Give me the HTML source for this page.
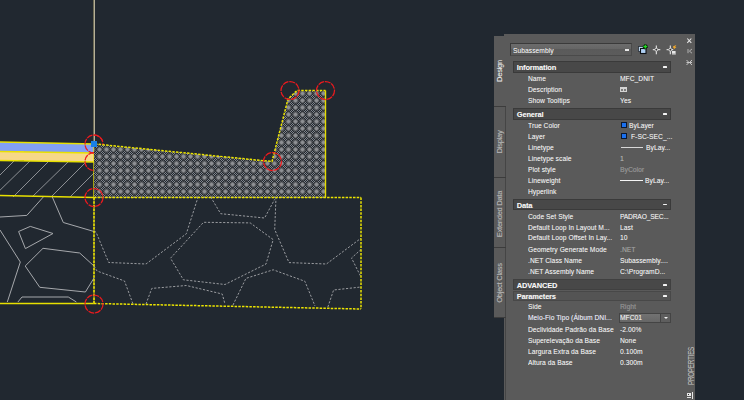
<!DOCTYPE html>
<html><head><meta charset="utf-8">
<style>
*{margin:0;padding:0;box-sizing:border-box}
html,body{width:744px;height:400px;overflow:hidden;background:#212830;font-family:"Liberation Sans",sans-serif}
.a{position:absolute}
.t{position:absolute;font-size:7.7px;line-height:10px;white-space:nowrap;color:#f2f2f2;letter-spacing:0.1px;text-shadow:0.3px 0 0 rgba(240,240,240,0.35);transform:scaleX(0.86);transform-origin:0 0}
.b{font-weight:bold;letter-spacing:-0.1px;color:#f4f4f4}
</style></head><body>
<svg width="744" height="400" viewBox="0 0 744 400" style="position:absolute;left:0;top:0" shape-rendering="crispEdges">
<defs>
<pattern id="hp" x="12" y="13" width="14" height="14" patternUnits="userSpaceOnUse"><rect x="0" y="0" width="1" height="1" fill="#80868e"/><rect x="1" y="0" width="1" height="1" fill="#22262c"/><rect x="2" y="0" width="1" height="1" fill="#50545a"/><rect x="3" y="0" width="1" height="1" fill="#36393e"/><rect x="4" y="0" width="1" height="1" fill="#50545a"/><rect x="5" y="0" width="1" height="1" fill="#22262c"/><rect x="6" y="0" width="1" height="1" fill="#80868e"/><rect x="7" y="0" width="1" height="1" fill="#22262c"/><rect x="8" y="0" width="1" height="1" fill="#80868e"/><rect x="9" y="0" width="1" height="1" fill="#2c3035"/><rect x="10" y="0" width="1" height="1" fill="#36393e"/><rect x="11" y="0" width="1" height="1" fill="#2c3035"/><rect x="12" y="0" width="1" height="1" fill="#80868e"/><rect x="13" y="0" width="1" height="1" fill="#22262c"/><rect x="0" y="1" width="1" height="1" fill="#22262c"/><rect x="1" y="1" width="1" height="1" fill="#50545a"/><rect x="2" y="1" width="1" height="1" fill="#55585c"/><rect x="3" y="1" width="1" height="1" fill="#6c6e72"/><rect x="4" y="1" width="1" height="1" fill="#55585c"/><rect x="5" y="1" width="1" height="1" fill="#50545a"/><rect x="6" y="1" width="1" height="1" fill="#22262c"/><rect x="7" y="1" width="1" height="1" fill="#80868e"/><rect x="8" y="1" width="1" height="1" fill="#2c3035"/><rect x="9" y="1" width="1" height="1" fill="#55585c"/><rect x="10" y="1" width="1" height="1" fill="#6c6e72"/><rect x="11" y="1" width="1" height="1" fill="#55585c"/><rect x="12" y="1" width="1" height="1" fill="#2c3035"/><rect x="13" y="1" width="1" height="1" fill="#80868e"/><rect x="0" y="2" width="1" height="1" fill="#50545a"/><rect x="1" y="2" width="1" height="1" fill="#55585c"/><rect x="2" y="2" width="1" height="1" fill="#808286"/><rect x="3" y="2" width="1" height="1" fill="#8e9094"/><rect x="4" y="2" width="1" height="1" fill="#808286"/><rect x="5" y="2" width="1" height="1" fill="#55585c"/><rect x="6" y="2" width="1" height="1" fill="#50545a"/><rect x="7" y="2" width="1" height="1" fill="#2c3035"/><rect x="8" y="2" width="1" height="1" fill="#55585c"/><rect x="9" y="2" width="1" height="1" fill="#808286"/><rect x="10" y="2" width="1" height="1" fill="#8e9094"/><rect x="11" y="2" width="1" height="1" fill="#808286"/><rect x="12" y="2" width="1" height="1" fill="#55585c"/><rect x="13" y="2" width="1" height="1" fill="#2c3035"/><rect x="0" y="3" width="1" height="1" fill="#36393e"/><rect x="1" y="3" width="1" height="1" fill="#6c6e72"/><rect x="2" y="3" width="1" height="1" fill="#8e9094"/><rect x="3" y="3" width="1" height="1" fill="#8e9094"/><rect x="4" y="3" width="1" height="1" fill="#8e9094"/><rect x="5" y="3" width="1" height="1" fill="#6c6e72"/><rect x="6" y="3" width="1" height="1" fill="#36393e"/><rect x="7" y="3" width="1" height="1" fill="#36393e"/><rect x="8" y="3" width="1" height="1" fill="#6c6e72"/><rect x="9" y="3" width="1" height="1" fill="#8e9094"/><rect x="10" y="3" width="1" height="1" fill="#8e9094"/><rect x="11" y="3" width="1" height="1" fill="#8e9094"/><rect x="12" y="3" width="1" height="1" fill="#6c6e72"/><rect x="13" y="3" width="1" height="1" fill="#36393e"/><rect x="0" y="4" width="1" height="1" fill="#50545a"/><rect x="1" y="4" width="1" height="1" fill="#55585c"/><rect x="2" y="4" width="1" height="1" fill="#808286"/><rect x="3" y="4" width="1" height="1" fill="#8e9094"/><rect x="4" y="4" width="1" height="1" fill="#808286"/><rect x="5" y="4" width="1" height="1" fill="#55585c"/><rect x="6" y="4" width="1" height="1" fill="#50545a"/><rect x="7" y="4" width="1" height="1" fill="#2c3035"/><rect x="8" y="4" width="1" height="1" fill="#55585c"/><rect x="9" y="4" width="1" height="1" fill="#808286"/><rect x="10" y="4" width="1" height="1" fill="#8e9094"/><rect x="11" y="4" width="1" height="1" fill="#808286"/><rect x="12" y="4" width="1" height="1" fill="#55585c"/><rect x="13" y="4" width="1" height="1" fill="#2c3035"/><rect x="0" y="5" width="1" height="1" fill="#22262c"/><rect x="1" y="5" width="1" height="1" fill="#50545a"/><rect x="2" y="5" width="1" height="1" fill="#55585c"/><rect x="3" y="5" width="1" height="1" fill="#6c6e72"/><rect x="4" y="5" width="1" height="1" fill="#55585c"/><rect x="5" y="5" width="1" height="1" fill="#50545a"/><rect x="6" y="5" width="1" height="1" fill="#22262c"/><rect x="7" y="5" width="1" height="1" fill="#80868e"/><rect x="8" y="5" width="1" height="1" fill="#2c3035"/><rect x="9" y="5" width="1" height="1" fill="#55585c"/><rect x="10" y="5" width="1" height="1" fill="#6c6e72"/><rect x="11" y="5" width="1" height="1" fill="#55585c"/><rect x="12" y="5" width="1" height="1" fill="#2c3035"/><rect x="13" y="5" width="1" height="1" fill="#80868e"/><rect x="0" y="6" width="1" height="1" fill="#80868e"/><rect x="1" y="6" width="1" height="1" fill="#22262c"/><rect x="2" y="6" width="1" height="1" fill="#50545a"/><rect x="3" y="6" width="1" height="1" fill="#36393e"/><rect x="4" y="6" width="1" height="1" fill="#50545a"/><rect x="5" y="6" width="1" height="1" fill="#22262c"/><rect x="6" y="6" width="1" height="1" fill="#80868e"/><rect x="7" y="6" width="1" height="1" fill="#22262c"/><rect x="8" y="6" width="1" height="1" fill="#80868e"/><rect x="9" y="6" width="1" height="1" fill="#2c3035"/><rect x="10" y="6" width="1" height="1" fill="#36393e"/><rect x="11" y="6" width="1" height="1" fill="#2c3035"/><rect x="12" y="6" width="1" height="1" fill="#80868e"/><rect x="13" y="6" width="1" height="1" fill="#22262c"/><rect x="0" y="7" width="1" height="1" fill="#22262c"/><rect x="1" y="7" width="1" height="1" fill="#80868e"/><rect x="2" y="7" width="1" height="1" fill="#2c3035"/><rect x="3" y="7" width="1" height="1" fill="#36393e"/><rect x="4" y="7" width="1" height="1" fill="#2c3035"/><rect x="5" y="7" width="1" height="1" fill="#80868e"/><rect x="6" y="7" width="1" height="1" fill="#22262c"/><rect x="7" y="7" width="1" height="1" fill="#80868e"/><rect x="8" y="7" width="1" height="1" fill="#22262c"/><rect x="9" y="7" width="1" height="1" fill="#50545a"/><rect x="10" y="7" width="1" height="1" fill="#36393e"/><rect x="11" y="7" width="1" height="1" fill="#50545a"/><rect x="12" y="7" width="1" height="1" fill="#22262c"/><rect x="13" y="7" width="1" height="1" fill="#80868e"/><rect x="0" y="8" width="1" height="1" fill="#80868e"/><rect x="1" y="8" width="1" height="1" fill="#2c3035"/><rect x="2" y="8" width="1" height="1" fill="#55585c"/><rect x="3" y="8" width="1" height="1" fill="#6c6e72"/><rect x="4" y="8" width="1" height="1" fill="#55585c"/><rect x="5" y="8" width="1" height="1" fill="#2c3035"/><rect x="6" y="8" width="1" height="1" fill="#80868e"/><rect x="7" y="8" width="1" height="1" fill="#22262c"/><rect x="8" y="8" width="1" height="1" fill="#50545a"/><rect x="9" y="8" width="1" height="1" fill="#55585c"/><rect x="10" y="8" width="1" height="1" fill="#6c6e72"/><rect x="11" y="8" width="1" height="1" fill="#55585c"/><rect x="12" y="8" width="1" height="1" fill="#50545a"/><rect x="13" y="8" width="1" height="1" fill="#22262c"/><rect x="0" y="9" width="1" height="1" fill="#2c3035"/><rect x="1" y="9" width="1" height="1" fill="#55585c"/><rect x="2" y="9" width="1" height="1" fill="#808286"/><rect x="3" y="9" width="1" height="1" fill="#8e9094"/><rect x="4" y="9" width="1" height="1" fill="#808286"/><rect x="5" y="9" width="1" height="1" fill="#55585c"/><rect x="6" y="9" width="1" height="1" fill="#2c3035"/><rect x="7" y="9" width="1" height="1" fill="#50545a"/><rect x="8" y="9" width="1" height="1" fill="#55585c"/><rect x="9" y="9" width="1" height="1" fill="#808286"/><rect x="10" y="9" width="1" height="1" fill="#8e9094"/><rect x="11" y="9" width="1" height="1" fill="#808286"/><rect x="12" y="9" width="1" height="1" fill="#55585c"/><rect x="13" y="9" width="1" height="1" fill="#50545a"/><rect x="0" y="10" width="1" height="1" fill="#36393e"/><rect x="1" y="10" width="1" height="1" fill="#6c6e72"/><rect x="2" y="10" width="1" height="1" fill="#8e9094"/><rect x="3" y="10" width="1" height="1" fill="#8e9094"/><rect x="4" y="10" width="1" height="1" fill="#8e9094"/><rect x="5" y="10" width="1" height="1" fill="#6c6e72"/><rect x="6" y="10" width="1" height="1" fill="#36393e"/><rect x="7" y="10" width="1" height="1" fill="#36393e"/><rect x="8" y="10" width="1" height="1" fill="#6c6e72"/><rect x="9" y="10" width="1" height="1" fill="#8e9094"/><rect x="10" y="10" width="1" height="1" fill="#8e9094"/><rect x="11" y="10" width="1" height="1" fill="#8e9094"/><rect x="12" y="10" width="1" height="1" fill="#6c6e72"/><rect x="13" y="10" width="1" height="1" fill="#36393e"/><rect x="0" y="11" width="1" height="1" fill="#2c3035"/><rect x="1" y="11" width="1" height="1" fill="#55585c"/><rect x="2" y="11" width="1" height="1" fill="#808286"/><rect x="3" y="11" width="1" height="1" fill="#8e9094"/><rect x="4" y="11" width="1" height="1" fill="#808286"/><rect x="5" y="11" width="1" height="1" fill="#55585c"/><rect x="6" y="11" width="1" height="1" fill="#2c3035"/><rect x="7" y="11" width="1" height="1" fill="#50545a"/><rect x="8" y="11" width="1" height="1" fill="#55585c"/><rect x="9" y="11" width="1" height="1" fill="#808286"/><rect x="10" y="11" width="1" height="1" fill="#8e9094"/><rect x="11" y="11" width="1" height="1" fill="#808286"/><rect x="12" y="11" width="1" height="1" fill="#55585c"/><rect x="13" y="11" width="1" height="1" fill="#50545a"/><rect x="0" y="12" width="1" height="1" fill="#80868e"/><rect x="1" y="12" width="1" height="1" fill="#2c3035"/><rect x="2" y="12" width="1" height="1" fill="#55585c"/><rect x="3" y="12" width="1" height="1" fill="#6c6e72"/><rect x="4" y="12" width="1" height="1" fill="#55585c"/><rect x="5" y="12" width="1" height="1" fill="#2c3035"/><rect x="6" y="12" width="1" height="1" fill="#80868e"/><rect x="7" y="12" width="1" height="1" fill="#22262c"/><rect x="8" y="12" width="1" height="1" fill="#50545a"/><rect x="9" y="12" width="1" height="1" fill="#55585c"/><rect x="10" y="12" width="1" height="1" fill="#6c6e72"/><rect x="11" y="12" width="1" height="1" fill="#55585c"/><rect x="12" y="12" width="1" height="1" fill="#50545a"/><rect x="13" y="12" width="1" height="1" fill="#22262c"/><rect x="0" y="13" width="1" height="1" fill="#22262c"/><rect x="1" y="13" width="1" height="1" fill="#80868e"/><rect x="2" y="13" width="1" height="1" fill="#2c3035"/><rect x="3" y="13" width="1" height="1" fill="#36393e"/><rect x="4" y="13" width="1" height="1" fill="#2c3035"/><rect x="5" y="13" width="1" height="1" fill="#80868e"/><rect x="6" y="13" width="1" height="1" fill="#22262c"/><rect x="7" y="13" width="1" height="1" fill="#80868e"/><rect x="8" y="13" width="1" height="1" fill="#22262c"/><rect x="9" y="13" width="1" height="1" fill="#50545a"/><rect x="10" y="13" width="1" height="1" fill="#36393e"/><rect x="11" y="13" width="1" height="1" fill="#50545a"/><rect x="12" y="13" width="1" height="1" fill="#22262c"/><rect x="13" y="13" width="1" height="1" fill="#80868e"/></pattern>
</defs>
<rect x="93" y="0" width="1" height="141" fill="#6c6a55"/><rect x="94" y="0" width="1" height="141" fill="#b6b098"/>
<g stroke="#8c8f94" stroke-width="1" shape-rendering="geometricPrecision">
<line x1="-20" y1="195" x2="15" y2="160"/>
<line x1="-7" y1="197" x2="30" y2="161"/>
<line x1="13" y1="197" x2="49" y2="161"/>
<line x1="32" y1="197" x2="68" y2="162"/>
<line x1="51" y1="197" x2="86" y2="162"/>
<line x1="70" y1="197" x2="94" y2="173"/>
</g>
<polygon points="0,142 94,144 94,153 0,151" fill="#82a0f4"/>
<polygon points="0,151 94,153 94,162 0,160" fill="#f7d888"/>
<g stroke="#e8e000" stroke-width="1.3" fill="none" shape-rendering="geometricPrecision">
<line x1="0" y1="142" x2="94" y2="144"/>
<line x1="0" y1="151.5" x2="94" y2="153"/>
<line x1="0" y1="160.5" x2="94" y2="162"/>
<line x1="0" y1="195.5" x2="94" y2="197.5"/>
<line x1="0" y1="303.5" x2="94" y2="303.5"/>
<line x1="94" y1="144" x2="94" y2="197.5"/>
<line x1="94" y1="197.5" x2="94" y2="304" stroke="#9a9420" stroke-width="1"/>
</g>
<g stroke="#a6a8ac" stroke-width="1" fill="none" shape-rendering="geometricPrecision">
<polyline points="0,217 26.8,215.4 43.3,197"/>
<polyline points="52.3,197 63.3,222.5 94,231.5"/>
<polygon points="18.6,231.5 30.3,226.4 53,233.5 25.4,248.6"/>
<polyline points="0,230 20.3,262 7.3,302"/>
<polyline points="94,266 79.7,253 43,248.3 25.2,266 39.8,287.3 85.4,292 94,278"/>
<polyline points="17.9,302 22,297 68.3,297 76.4,302"/>
</g>
<g stroke="#9a9ca0" stroke-width="1" fill="none" stroke-dasharray="2.2 1.6" shape-rendering="geometricPrecision">
<polyline points="94,231.5 96,232 108.7,262.5 146,264 186.3,233.8 197.8,197.9"/>
<polyline points="94,266 97,271 124.5,281 133,304"/>
<polyline points="146,304 151.8,288.4 186.3,285.5 222.2,294 225,304"/>
<polygon points="170.5,258.2 203.5,222.3 250.2,222.9 273.2,239.6 266,264 225,284.5 183.4,279.8"/>
<polyline points="210.7,197 220.7,213.7 264.6,218 274.7,199.3"/>
<polyline points="276,197 274.7,229.5 289,262.6 326.4,264 361,238.2"/>
<polyline points="233,305 245.9,278.4 273.2,269.8 304.9,281.3 315,306"/>
<polyline points="361,249.5 351.5,258 361,277"/>
<polyline points="327.9,307 333.6,290 361,287"/>
</g>
<g stroke="#ec1a1e" stroke-width="1.25" fill="none" stroke-dasharray="6 0.9" shape-rendering="geometricPrecision">
<circle cx="94" cy="144" r="9"/>
<path d="M94,152.5 A9,9 0 0 0 94,170.5"/>
</g>
<polygon points="94,144 272,161.5 288,99 297,90.5 325.5,90.5 325.5,197.5 94,197.5" fill="url(#hp)"/>
<g stroke="#ece400" stroke-width="1.5" fill="none" stroke-dasharray="2.5 1.2" shape-rendering="geometricPrecision">
<polyline points="95,144 272,161.5 288,99 297,90.5 325.5,90.5"/>
<line x1="94" y1="197.5" x2="361" y2="197.5"/>
<line x1="361" y1="197.5" x2="361" y2="309"/>
<line x1="94" y1="303.5" x2="361" y2="309"/>
<line x1="94" y1="197.5" x2="94" y2="304"/>
</g>
<line x1="325.5" y1="90.5" x2="325.5" y2="197.5" stroke="#e4dc00" stroke-width="1.4" shape-rendering="geometricPrecision"/>
<g stroke="#ec1a1e" stroke-width="1.25" fill="none" stroke-dasharray="6 0.9" shape-rendering="geometricPrecision">
<path d="M94,135 A9,9 0 0 1 102.5,141"/>
<circle cx="94" cy="197.5" r="9"/>
<circle cx="94" cy="304" r="9"/>
<circle cx="272.5" cy="161.5" r="9"/>
<circle cx="290" cy="90.5" r="9"/>
<circle cx="325.5" cy="90.5" r="9"/>
</g>
<rect x="91" y="141" width="6" height="6" fill="#1a80e6"/>
</svg>
<div class="a" style="left:504px;top:34px;width:191px;height:366px;background:#5a5a5a"></div>
<div class="a" style="left:494px;top:36px;width:11px;height:282px;background:#5a5a5a"></div>
<div class="a" style="left:505px;top:106px;width:1px;height:294px;background:#454545"></div>
<div class="a" style="left:494px;top:106px;width:12px;height:1px;background:#3c3c3c"></div>
<div class="a" style="left:494px;top:177px;width:12px;height:1px;background:#3c3c3c"></div>
<div class="a" style="left:494px;top:247px;width:12px;height:1px;background:#3c3c3c"></div>
<div class="a" style="left:494px;top:317px;width:12px;height:1px;background:#3c3c3c"></div>
<div class="t" style="left:460px;top:65.5px;width:80px;text-align:center;transform:rotate(-90deg);transform-origin:50% 50%;color:#f0f0f0;font-size:7.4px;letter-spacing:-0.2px">Design</div>
<div class="t" style="left:460px;top:137.4px;width:80px;text-align:center;transform:rotate(-90deg);transform-origin:50% 50%;color:#b4b4b4;font-size:7.4px;letter-spacing:-0.2px">Display</div>
<div class="t" style="left:460px;top:208.8px;width:80px;text-align:center;transform:rotate(-90deg);transform-origin:50% 50%;color:#b4b4b4;font-size:7.4px;letter-spacing:-0.2px">Extended Data</div>
<div class="t" style="left:460px;top:277.9px;width:80px;text-align:center;transform:rotate(-90deg);transform-origin:50% 50%;color:#b4b4b4;font-size:7.4px;letter-spacing:-0.2px">Object Class</div>
<div class="a" style="left:510px;top:43px;width:122px;height:13px;background:linear-gradient(#6c6c6c,#646464 50%,#5a5a5a 50%,#5c5c5c);border:1px solid #3a3a3a;border-right-color:#4a4a4a;border-bottom-color:#4a4a4a"></div>
<div class="t" style="left:512.5px;top:46.23px;">Subassembly</div>
<div class="a" style="left:625px;top:49px;width:4px;height:2px;background:#e8e8e8"></div>
<svg class="a" style="left:630px;top:36px" width="65" height="34" viewBox="630 36 65 34" shape-rendering="geometricPrecision">
<rect x="638.5" y="46.5" width="5" height="5" fill="#c0dcf4" stroke="#2a3038" stroke-width="0.8"/>
<rect x="640.5" y="48.5" width="5.5" height="5" fill="#b0d0f4" stroke="#0c1014" stroke-width="1.1"/>
<path d="M645.3,44.2 v5 M642.8,46.7 h5" stroke="#0a200a" stroke-width="2.4"/>
<path d="M645.3,44.8 v3.8 M643.4,46.7 h3.8" stroke="#22e022" stroke-width="1.2"/>
<g stroke="#f4f4f4" stroke-width="1" fill="none">
<path d="M656.3,45.5 v2.6 M656.3,51.3 v3 M652.8,49.7 h2 M657.9,49.7 h2.4"/>
<circle cx="656.3" cy="49.7" r="1.4" fill="#2a2a2a" stroke-width="0.9"/>
<path d="M670.3,45.5 v2.6 M670.3,51.3 v3 M666.6,49.7 h2 M671.9,49.7 h1.3"/>
<circle cx="670.3" cy="49.7" r="1.4" fill="#2a2a2a" stroke-width="0.9"/>
</g>
<path d="M673.2,46.2 l3.2,-1.2 -1.3,2 1.4,0 -3.2,2.8 0.9,-2.1 -1.3,0z" fill="#f2a82a"/>
<rect x="672" y="51" width="3.6" height="3.6" fill="#e8e8e8"/>
<rect x="672" y="53.6" width="3.6" height="1" fill="#909090"/>
<g stroke="#e6e6e6" stroke-width="1.1" fill="none">
<path d="M687.3,38.5 l4,4.3 M691.3,38.5 l-4,4.3"/>
<path d="M688,49 v4.2 M692,49 l-2.6,2.1 2.6,2.1" stroke="#c8c8c8" stroke-width="0.8"/>
<path d="M686.5,60 l2.5,2.5 -2.5,2.5 M692,60 l-2.5,2.5 2.5,2.5 M686.5,62.5 h5.5" stroke="#d0d0d0" stroke-width="0.9"/>
</g>
</svg>
<div class="a" style="left:513px;top:61.25px;width:158px;height:11.25px;background:#484848;border:1px solid #3a3a3a"></div><div class="t" style="left:516.8px;top:63.11px;font-weight:bold;font-size:7.4px;letter-spacing:-0.12px;color:#f6f6f6;transform:none">Information</div><div class="a" style="left:663.3px;top:66.28px;width:3.6px;height:1.4px;background:#f4f4f4;border-radius:0.5px"></div>
<div class="t" style="left:527.5px;top:73.93px;">Name</div><div class="t" style="left:620px;top:73.93px;">MFC_DNIT</div>
<div class="t" style="left:527.5px;top:85.23px;">Description</div>
<div class="a" style="left:620px;top:87px;width:7px;height:5px;background:#d4d4d4"></div><div class="a" style="left:621px;top:88.5px;width:2px;height:2px;background:#7c7c7c"></div><div class="a" style="left:624px;top:88.5px;width:2px;height:2px;background:#7c7c7c"></div>
<div class="t" style="left:527.5px;top:96.03px;">Show Tooltips</div><div class="t" style="left:620px;top:96.03px;">Yes</div>
<div class="a" style="left:513px;top:108px;width:158px;height:11.6px;background:#484848;border:1px solid #3a3a3a"></div><div class="t" style="left:516.8px;top:110.03px;font-weight:bold;font-size:7.4px;letter-spacing:-0.12px;color:#f6f6f6;transform:none">General</div><div class="a" style="left:663.3px;top:113.20px;width:3.6px;height:1.4px;background:#f4f4f4;border-radius:0.5px"></div>
<div class="t" style="left:527.5px;top:120.53px;">True Color</div>
<div class="t" style="left:629px;top:120.53px;">ByLayer</div>
<div class="a" style="left:620.5px;top:122px;width:6px;height:6px;background:#1a70ee;border:1px solid #0a1830"></div>
<div class="t" style="left:527.5px;top:131.73px;">Layer</div>
<div class="t" style="left:631.2px;top:131.73px;">F-SC-SEC_...</div>
<div class="a" style="left:620.5px;top:133px;width:6px;height:6px;background:#1a70ee;border:1px solid #0a1830"></div>
<div class="t" style="left:527.5px;top:142.93px;">Linetype</div>
<div class="a" style="left:621px;top:147px;width:22px;height:1px;background:#d8d8d8"></div>
<div class="t" style="left:645.5px;top:142.93px;">ByLay...</div>
<div class="t" style="left:527.5px;top:153.93px;">Linetype scale</div><div class="t" style="left:620px;top:153.93px;color:#b0b0b0;">1</div>
<div class="t" style="left:527.5px;top:164.93px;">Plot style</div><div class="t" style="left:620px;top:164.93px;color:#8e8e8e;">ByColor</div>
<div class="t" style="left:527.5px;top:176.23px;">Lineweight</div>
<div class="a" style="left:620px;top:180.2px;width:23px;height:1.3px;background:#f4f4f4"></div>
<div class="t" style="left:645px;top:176.23px;">ByLay...</div>
<div class="t" style="left:527.5px;top:186.93px;">Hyperlink</div>
<div class="a" style="left:513px;top:199px;width:158px;height:11.4px;background:#484848;border:1px solid #3a3a3a"></div><div class="t" style="left:516.8px;top:200.93px;font-weight:bold;font-size:7.4px;letter-spacing:-0.12px;color:#f6f6f6;transform:none">Data</div><div class="a" style="left:663.3px;top:204.10px;width:3.6px;height:1.4px;background:#f4f4f4;border-radius:0.5px"></div>
<div class="t" style="left:527.5px;top:211.53px;">Code Set Style</div>
<div class="t" style="left:620px;top:211.53px;letter-spacing:-0.15px">PADRAO_SEC...</div>
<div class="t" style="left:527.5px;top:222.83px;">Default Loop In Layout M...</div><div class="t" style="left:620px;top:222.83px;">Last</div>
<div class="t" style="left:527.5px;top:233.33px;">Default Loop Offset In Lay...</div><div class="t" style="left:620px;top:233.33px;">10</div>
<div class="t" style="left:527.5px;top:244.63px;">Geometry Generate Mode</div><div class="t" style="left:620px;top:244.63px;color:#9a9a9a;">.NET</div>
<div class="t" style="left:527.5px;top:255.63px;">.NET Class Name</div><div class="t" style="left:620px;top:255.63px;">Subassembly....</div>
<div class="t" style="left:527.5px;top:266.93px;">.NET Assembly Name</div><div class="t" style="left:620px;top:266.93px;">C:\ProgramD...</div>
<div class="a" style="left:513px;top:279.2px;width:158px;height:11.3px;background:#484848;border:1px solid #404040"></div><div class="t" style="left:516.8px;top:281.08px;font-weight:bold;font-size:7.4px;letter-spacing:-0.12px;color:#f6f6f6;transform:none">ADVANCED</div><div class="a" style="left:663.3px;top:284.25px;width:3.6px;height:1.4px;background:#f4f4f4;border-radius:0.5px"></div>
<div class="a" style="left:513px;top:290.5px;width:158px;height:10.8px;background:#545454;border:1px solid #484848"></div><div class="t" style="left:516.8px;top:292.13px;font-weight:bold;font-size:7.4px;letter-spacing:-0.12px;color:#f6f6f6;transform:none">Parameters</div><div class="a" style="left:663.3px;top:295.30px;width:3.6px;height:1.4px;background:#f4f4f4;border-radius:0.5px"></div>
<div class="t" style="left:527.5px;top:302.23px;">Side</div><div class="t" style="left:620px;top:302.23px;color:#8a8a8a;">Right</div>
<div class="a" style="left:619px;top:313px;width:51.5px;height:10px;background:linear-gradient(#727272,#666666);border:1px solid #444444"></div>
<div class="a" style="left:660px;top:313px;width:10.5px;height:10px;background:#5e5e5e;border:1px solid #444444"></div>
<div class="a" style="left:663.5px;top:317px;width:0;height:0;border-left:2px solid transparent;border-right:2px solid transparent;border-top:2.5px solid #f0f0f0"></div>
<div class="t" style="left:527.5px;top:313.23px;color:#eeeeff;">Meio-Fio Tipo (Álbum DNI...</div>
<div class="t" style="left:620px;top:313.23px;">MFC01</div>
<div class="t" style="left:527.5px;top:324.83px;">Declividade Padrão da Base</div><div class="t" style="left:620px;top:324.83px;">-2.00%</div>
<div class="t" style="left:527.5px;top:335.73px;">Superelevação da Base</div><div class="t" style="left:620px;top:335.73px;">None</div>
<div class="t" style="left:527.5px;top:347.03px;">Largura Extra da Base</div><div class="t" style="left:620px;top:347.03px;">0.100m</div>
<div class="t" style="left:527.5px;top:358.23px;">Altura da Base</div><div class="t" style="left:620px;top:358.23px;">0.300m</div>
<div class="t" style="left:650.5px;top:361px;width:80px;text-align:center;transform:rotate(-90deg) scaleX(0.75);transform-origin:50% 50%;color:#c4c4c4;font-size:8.4px;letter-spacing:-0.3px;text-shadow:none">PROPERTIES</div>
<div class="a" style="left:687px;top:393px;width:4px;height:3px;background:#e8e8e8"></div><div class="a" style="left:688px;top:394px;width:1px;height:1px;background:#303030"></div><div class="a" style="left:687px;top:397px;width:4px;height:1px;background:#e0e0e0"></div><div class="a" style="left:692px;top:392px;width:1px;height:7px;background:#e8e8e8"></div>
</body></html>
